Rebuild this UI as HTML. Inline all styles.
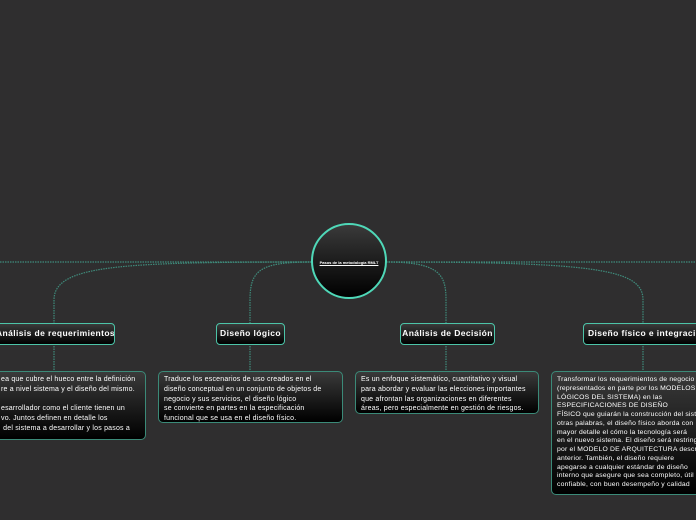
<!DOCTYPE html>
<html><head><meta charset="utf-8"><style>
html,body{margin:0;padding:0}
body{width:696px;height:520px;background:#2f2e2f;position:relative;overflow:hidden;font-family:"Liberation Sans","DejaVu Sans",sans-serif;color:#fff}
.node{position:absolute;top:323px;height:22px;box-sizing:border-box;border:1.5px solid #4cc4a8;border-radius:4px;background:linear-gradient(#3a3a3a,#000);font-weight:bold;font-size:8.5px;letter-spacing:0.4px;line-height:19px;text-align:center;white-space:nowrap;overflow:hidden}
.box{position:absolute;top:371px;box-sizing:border-box;border:1px solid #3b8a78;border-radius:5px;background:linear-gradient(#3a3a3a,#000);font-size:7px;letter-spacing:0.2px;line-height:9.8px;padding:3px 5px;white-space:nowrap;overflow:hidden}
.c{position:absolute;left:311px;top:223px;width:76px;height:76px;box-sizing:border-box;border:2px solid #4fd8b8;border-radius:50%;background:linear-gradient(#3a3a3a,#000);}
.c span{position:absolute;left:0;right:0;top:35px;text-align:center;font-size:4px;font-weight:bold;text-decoration:underline}
</style></head><body>
<svg width="696" height="520" style="position:absolute;left:0;top:0" fill="none" stroke="#3f8c7c" stroke-width="1.2" stroke-dasharray="1.5 1">
<path d="M0 262 H312"/><path d="M386 262 H696"/>
<path d="M312 262 C120 262 54 265 54 300 V324"/>
<path d="M312 262 C260 262 250 270 250 300 V324"/>
<path d="M386 262 C440 262 446 275 446 300 V324"/>
<path d="M386 262 C600 262 643 270 643 300 V324"/>
<path d="M54 346 V372"/><path d="M250 346 V372"/><path d="M446 346 V372"/><path d="M643 346 V372"/>
</svg>
<div class="c"><span>Pasos de la metodología RMLT</span></div>
<div class="node" style="left:-5px;width:120px">Análisis de requerimientos</div>
<div class="node" style="left:216px;width:69px">Diseño lógico</div>
<div class="node" style="left:400px;width:95px">Análisis de Decisión</div>
<div class="node" style="left:583px;width:120px;text-align:left;padding-left:4px">Diseño físico e integración</div>
<div class="box" style="left:-5px;width:151px;height:69px">ea que cubre el hueco entre la definición<br>re a nivel sistema y el diseño del mismo.<br><br>esarrollador como el cliente tienen un<br>vo. Juntos definen en detalle los<br>&nbsp;del sistema a desarrollar y los pasos a</div>
<div class="box" style="left:158px;width:185px;height:52px">Traduce los escenarios de uso creados en el<br>diseño conceptual en un conjunto de objetos de<br>negocio y sus servicios, el diseño lógico<br>se convierte en partes en la especificación<br>funcional que se usa en el diseño físico.</div>
<div class="box" style="left:355px;width:184px;height:43px">Es un enfoque sistemático, cuantitativo y visual<br>para abordar y evaluar las elecciones importantes<br>que afrontan las organizaciones en diferentes<br>áreas, pero especialmente en gestión de riesgos.</div>
<div class="box" style="left:551px;width:150px;height:124px;line-height:8.75px;padding-top:4px;font-size:6.8px">Transformar los <span>requerimientos de negocio</span><br>(representados <span>en parte por los MODELOS</span><br>LÓGICOS DEL S<span>ISTEMA) en las</span><br>ESPECIFICACIO<span>NES DE DISEÑO</span><br>FÍSICO que gu<span>iarán la construcción del sistema</span><br>otras palabras, <span>el diseño físico aborda con</span><br>mayor detalle e<span>l cómo la tecnología será</span><br>en el nuevo sis<span>tema. El diseño será restringido</span><br>por el MODELO <span>DE ARQUITECTURA descrito</span><br>anterior. Tambi<span>én, el diseño requiere</span><br>apegarse a cua<span>lquier estándar de diseño</span><br>interno que ase<span>gure que sea completo, útil</span><br>confiable, con <span>buen desempeño y calidad</span></div>
</body></html>
